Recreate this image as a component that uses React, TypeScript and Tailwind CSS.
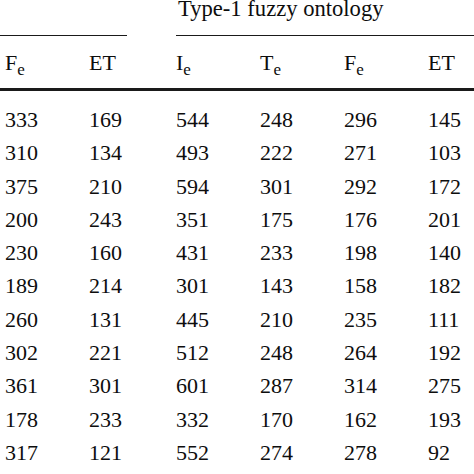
import React from "react";

const rows: string[][] = [
  ["333", "169", "544", "248", "296", "145"],
  ["310", "134", "493", "222", "271", "103"],
  ["375", "210", "594", "301", "292", "172"],
  ["200", "243", "351", "175", "176", "201"],
  ["230", "160", "431", "233", "198", "140"],
  ["189", "214", "301", "143", "158", "182"],
  ["260", "131", "445", "210", "235", "111"],
  ["302", "221", "512", "248", "264", "192"],
  ["361", "301", "601", "287", "314", "275"],
  ["178", "233", "332", "170", "162", "193"],
  ["317", "121", "552", "274", "278", "92"],
];

const Sub = ({ base, sub }: { base: string; sub?: string }) => (
  <span>
    {base}
    {sub && <span className="relative top-[5px] text-[17px]">{sub}</span>}
  </span>
);

const header: { base: string; sub?: string }[] = [
  { base: "F", sub: "e" },
  { base: "ET" },
  { base: "I", sub: "e" },
  { base: "T", sub: "e" },
  { base: "F", sub: "e" },
  { base: "ET" },
];

const colClass = "grid grid-cols-[84px_87px_84px_84px_84px_1fr] pl-[5px]";

export default function App() {
  return (
    <div
      className="w-[474px] h-[474px] overflow-hidden bg-white text-[#0d0d0d] text-[22px]"
      style={{ fontFamily: '"Liberation Serif", "Times New Roman", serif' }}
    >
      <div className="pl-[178px] h-[18px] leading-[18px] text-[22.6px] whitespace-nowrap">Type-1 fuzzy ontology</div>
      <div className="mt-[17px] flex h-px">
        <div className="w-[127px] bg-[#1a1a1a]" />
        <div className="w-[49px]" />
        <div className="flex-1 bg-[#1a1a1a]" />
      </div>
      <div className={`${colClass} mt-[10px] h-[33px] leading-[33px]`}>
        {header.map((h, i) => (
          <div key={i}>
            <Sub base={h.base} sub={h.sub} />
          </div>
        ))}
      </div>
      <div className="mt-[9px] h-[3px] bg-[#1a1a1a]" />
      <div className="mt-[12px]">
        {rows.map((r, i) => (
          <div key={i} className={`${colClass} h-[33.3px] leading-[33.3px]`}>
            {r.map((c, j) => (
              <div key={j}>{c}</div>
            ))}
          </div>
        ))}
      </div>
    </div>
  );
}
